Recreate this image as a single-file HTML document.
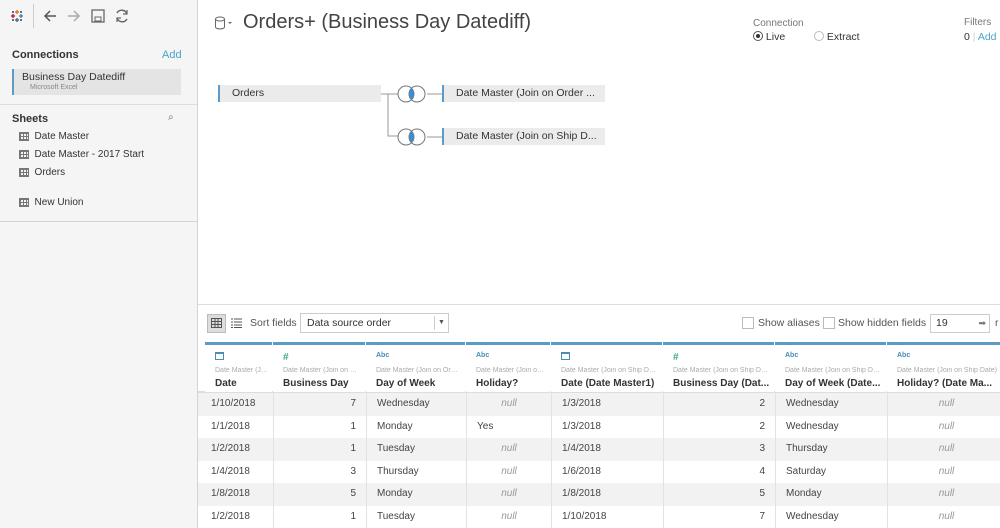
<!DOCTYPE html>
<html><head><meta charset="utf-8"><style>
*{margin:0;padding:0;box-sizing:border-box}
body{width:1000px;height:528px;overflow:hidden;font-family:"Liberation Sans",sans-serif;background:#fff;position:relative;color:#333}
.a{position:absolute;white-space:nowrap}
#left{position:absolute;left:0;top:0;width:198px;height:528px;background:#f5f5f5;border-right:1px solid #d4d4d4}
.sh{font-size:10px;color:#333}
.ti{display:inline-block;width:10px;height:9px;border:1px solid #777;background:repeating-linear-gradient(90deg,#777 0 1px,transparent 1px 3px),repeating-linear-gradient(0deg,#777 0 1px,transparent 1px 3px);vertical-align:middle}
.col{position:absolute;top:342px;height:186px}
.hd{position:absolute;top:0;left:0;right:1px;height:50px;border-top:3px solid #5a9bc7;background:#fff}
.ic{position:absolute;left:10px;top:7px;font-size:7px;font-weight:bold;color:#4a8bb7}
.src{position:absolute;left:10px;top:22px;font-size:7px;color:#aaa;overflow:hidden;width:calc(100% - 14px);white-space:nowrap;text-overflow:ellipsis}
.nm{position:absolute;left:10px;top:33px;font-size:10px;font-weight:bold;color:#333;white-space:nowrap;overflow:hidden;width:calc(100% - 12px)}
.row{position:absolute;left:198px;width:802px;height:22.5px}
.cell{position:absolute;top:0;height:22.5px;line-height:22.5px;font-size:10px;color:#444;padding:0 10px;border-left:1px solid #e2e2e2;white-space:nowrap}
.r{text-align:right}
.n{text-align:center;font-style:italic;color:#999}
</style></head><body>
<div id="left">
 <svg class="a" style="left:10px;top:9px" width="14" height="14" viewBox="0 0 14 14"><g stroke-width="1.5"><path d="M7 1v4M5 3h4" stroke="#e8762b"/><path d="M7 9v4M5 11h4" stroke="#5b6591"/><path d="M1 7h4M3 5v4" stroke="#c72035"/><path d="M9 7h4M11 5v4" stroke="#59879b"/><path d="M3 2v2M2 3h2M11 2v2M10 3h2M3 10v2M2 11h2M11 10v2M10 11h2" stroke="#1f457e" stroke-width="1"/></g></svg>
 <div class="a" style="left:33px;top:4px;width:1px;height:24px;background:#ccc"></div>
 <svg class="a" style="left:42px;top:8px" width="16" height="16" viewBox="0 0 16 16"><path d="M14 8H3M8 3L3 8l5 5" fill="none" stroke="#555" stroke-width="1.5"/></svg>
 <svg class="a" style="left:66px;top:8px" width="16" height="16" viewBox="0 0 16 16"><path d="M2 8h11M8 3l5 5-5 5" fill="none" stroke="#aaa" stroke-width="1.5"/></svg>
 <svg class="a" style="left:91px;top:9px" width="14" height="14" viewBox="0 0 14 14"><rect x="1" y="1" width="12" height="12" fill="none" stroke="#666" stroke-width="1.3"/><rect x="4" y="8" width="6" height="4" fill="none" stroke="#666"/></svg>
 <svg class="a" style="left:114px;top:8px" width="16" height="16" viewBox="0 0 16 16"><path d="M13 6A5.5 5.5 0 0 0 3 5M3 10a5.5 5.5 0 0 0 10 1" fill="none" stroke="#666" stroke-width="1.4"/><path d="M13 2v4H9M3 14v-4h4" fill="none" stroke="#666" stroke-width="1.2"/></svg>
 <div class="a" style="left:12px;top:49px;font-size:11px;font-weight:bold">Connections</div>
 <div class="a" style="left:162px;top:49px;font-size:11px;color:#4ba3cd">Add</div>
 <div class="a" style="left:12px;top:69px;width:169px;height:26px;background:#e4e4e4;border-left:2px solid #5a9bc7"></div>
 <div class="a" style="left:22px;top:71px;font-size:10.5px;color:#333">Business Day Datediff</div>
 <div class="a" style="left:30px;top:84px;font-size:7px;color:#888">Microsoft Excel</div>
 <div class="a" style="left:0;top:104px;width:197px;height:1px;background:#ddd"></div>
 <div class="a" style="left:12px;top:113px;font-size:11px;font-weight:bold">Sheets</div>
 <div class="a" style="left:168px;top:112px;font-size:10px;color:#666">⌕</div>
 <div class="a sh" style="left:19px;top:131px"><span class="ti"></span>&nbsp; Date Master</div>
 <div class="a sh" style="left:19px;top:149px"><span class="ti"></span>&nbsp; Date Master - 2017 Start</div>
 <div class="a sh" style="left:19px;top:167px"><span class="ti"></span>&nbsp; Orders</div>
 <div class="a sh" style="left:19px;top:197px"><span class="ti"></span>&nbsp; New Union</div>
 <div class="a" style="left:0;top:221px;width:197px;height:1px;background:#d4d4d4"></div>
</div>

<svg class="a" style="left:214px;top:16px" width="20" height="14" viewBox="0 0 20 14"><ellipse cx="6" cy="3" rx="4.5" ry="2" fill="none" stroke="#666"/><path d="M1.5 3v8c0 1 2 2 4.5 2s4.5-1 4.5-2V3" fill="none" stroke="#666"/><path d="M14 6l2 2 2-2z" fill="#666"/></svg>
<div class="a" style="left:243px;top:11px;font-size:20px;color:#444">Orders+ (Business Day Datediff)</div>
<div class="a" style="left:753px;top:18px;font-size:10px;color:#777">Connection</div>
<div class="a" style="left:753px;top:31px;font-size:10.5px;color:#333"><span style="display:inline-block;width:10px;height:10px;border:1px solid #555;border-radius:50%;vertical-align:-1px;position:relative"><span style="position:absolute;left:2px;top:2px;width:4px;height:4px;border-radius:50%;background:#333"></span></span> Live</div>
<div class="a" style="left:814px;top:31px;font-size:10.5px;color:#333"><span style="display:inline-block;width:10px;height:10px;border:1px solid #bbb;border-radius:50%;vertical-align:-1px"></span> Extract</div>
<div class="a" style="left:964px;top:17px;font-size:10px;color:#777">Filters</div>
<div class="a" style="left:964px;top:31px;font-size:10.5px;color:#333">0 <span style="color:#ccc">|</span> <span style="color:#4ba3cd">Add</span></div>

<div class="a" style="left:218px;top:85px;width:163px;height:17px;background:#ebebeb;border-left:2px solid #5a9bc7;font-size:10.5px;line-height:17px;padding-left:12px">Orders</div>
<div class="a" style="left:442px;top:85px;width:163px;height:17px;background:#ebebeb;border-left:2px solid #5a9bc7;font-size:10.5px;line-height:17px;padding-left:12px">Date Master (Join on Order ...</div>
<div class="a" style="left:442px;top:128px;width:163px;height:17px;background:#ebebeb;border-left:2px solid #5a9bc7;font-size:10.5px;line-height:17px;padding-left:12px">Date Master (Join on Ship D...</div>
<svg class="a" style="left:380px;top:80px" width="65" height="70" viewBox="0 0 65 70"><g fill="none" stroke="#999"><path d="M1 14h17M8 14v42h10M47 14h15M47 57h15"/></g>
<g><circle cx="26" cy="14" r="8" fill="#fff" stroke="#777"/><circle cx="37" cy="14" r="8" fill="none" stroke="#777"/><path d="M31.5 8.2a8 8 0 0 1 0 11.6a8 8 0 0 1 0-11.6z" fill="#3d8ed0"/>
<circle cx="26" cy="57" r="8" fill="#fff" stroke="#777"/><circle cx="37" cy="57" r="8" fill="none" stroke="#777"/><path d="M31.5 51.2a8 8 0 0 1 0 11.6a8 8 0 0 1 0-11.6z" fill="#3d8ed0"/></g></svg>

<div class="a" style="left:198px;top:304px;width:802px;height:1px;background:#ddd"></div>
<div class="a" style="left:207px;top:314px;width:19px;height:19px;background:#ddd;border:1px solid #bbb"></div>
<svg class="a" style="left:211px;top:318px" width="11" height="10" viewBox="0 0 11 10"><rect x=".5" y=".5" width="10" height="9" fill="none" stroke="#555"/><path d="M.5 3.5h10M.5 6.5h10M4 .5v9M7 .5v9" stroke="#555"/></svg>
<svg class="a" style="left:231px;top:318px" width="11" height="10" viewBox="0 0 11 10"><path d="M0 1h2M0 4h2M0 7h2M0 9.5h2M3 1h8M3 4h8M3 7h8M3 9.5h8" stroke="#555"/></svg>
<div class="a" style="left:250px;top:317px;font-size:10.5px;color:#555">Sort fields</div>
<div class="a" style="left:300px;top:313px;width:149px;height:20px;border:1px solid #ccc;font-size:10.5px;line-height:18px;padding-left:6px;color:#333">Data source order<span style="position:absolute;right:0;top:2px;width:14px;height:14px;border-left:1px solid #ccc;font-size:7px;text-align:center;line-height:14px;color:#555">▼</span></div>
<div class="a" style="left:742px;top:317px;width:12px;height:12px;border:1px solid #bbb"></div>
<div class="a" style="left:758px;top:317px;font-size:10.5px;color:#555">Show aliases</div>
<div class="a" style="left:823px;top:317px;width:12px;height:12px;border:1px solid #bbb"></div>
<div class="a" style="left:838px;top:317px;font-size:10.5px;color:#555">Show hidden fields</div>
<div class="a" style="left:930px;top:314px;width:60px;height:19px;border:1px solid #ccc;font-size:10.5px;line-height:17px;padding-left:5px">19<span style="position:absolute;right:3px;top:0;color:#777;font-size:9px">➡</span></div>
<div class="a" style="left:995px;top:317px;font-size:10.5px;color:#555">r</div>

<div class="row" style="top:393px;background:#f2f2f2"></div>
<div class="row" style="top:438px;background:#f2f2f2"></div>
<div class="row" style="top:483px;background:#f2f2f2"></div>
<div class="a" style="left:198px;top:391px;width:802px;height:2px;background:#ddd"></div>

<div id="tbl"></div>
<script>
var cols=[[205,273,'▭','Date Master (Joi...','Date'],[273,366,'#','Date Master (Join on Or...','Business Day'],[366,466,'Abc','Date Master (Join on Order...','Day of Week'],[466,551,'Abc','Date Master (Join on ...','Holiday?'],[551,663,'▭','Date Master (Join on Ship Date)','Date (Date Master1)'],[663,775,'#','Date Master (Join on Ship Date)','Business Day (Dat...'],[775,887,'Abc','Date Master (Join on Ship Date)','Day of Week (Date...'],[887,1005,'Abc','Date Master (Join on Ship Date)','Holiday? (Date Ma...']];
var data=[['1/10/2018','7','Wednesday','null','1/3/2018','2','Wednesday','null'],['1/1/2018','1','Monday','Yes','1/3/2018','2','Wednesday','null'],['1/2/2018','1','Tuesday','null','1/4/2018','3','Thursday','null'],['1/4/2018','3','Thursday','null','1/6/2018','4','Saturday','null'],['1/8/2018','5','Monday','null','1/8/2018','5','Monday','null'],['1/2/2018','1','Tuesday','null','1/10/2018','7','Wednesday','null']];
var h='';
cols.forEach(function(c,i){var w=c[1]-c[0];var ic=c[2]=='#'?'<span style="color:#3daa7c;font-size:10px">#</span>':(c[2]=='▭'?'<span style="display:inline-block;width:9px;height:8px;border:1px solid #4a8bb7;border-top-width:2px"></span>':c[2]);
h+='<div class="col" style="left:'+c[0]+'px;width:'+w+'px"><div class="hd"><div class="ic">'+ic+'</div><div class="src">'+c[3]+'</div><div class="nm">'+c[4]+'</div></div></div>';
data.forEach(function(r,j){var v=r[i];var cl=(i==1||i==5)?'r':(v=='null'?'n':'');var l=i==0?198:c[0];var ww=i==0?w+7:w;
h+='<div class="cell '+cl+'" style="left:'+l+'px;width:'+ww+'px;top:'+(393+j*22.5)+'px;'+(i==0?'border-left:none;padding-left:13px':'')+'">'+v+'</div>';});});
document.getElementById('tbl').innerHTML=h;
</script>
</body></html>
